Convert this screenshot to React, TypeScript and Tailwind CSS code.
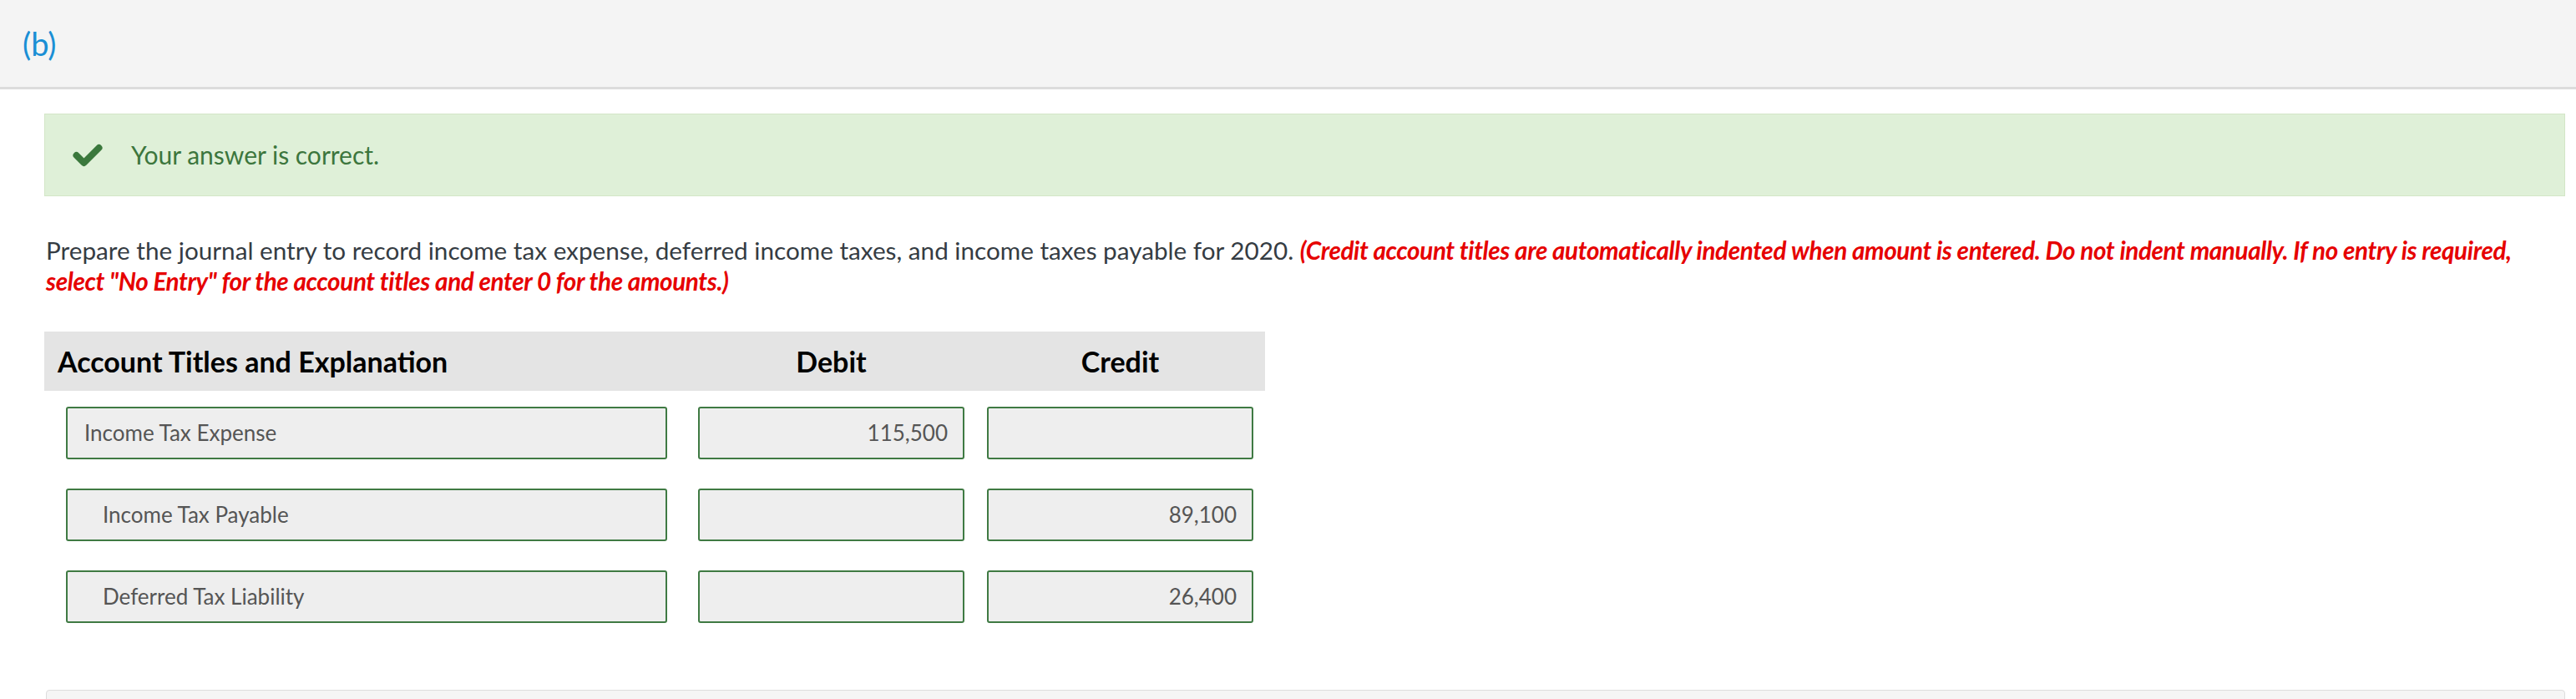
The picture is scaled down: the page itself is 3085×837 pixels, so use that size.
import React from "react";

const font = { fontFamily: "Lato, 'Open Sans', sans-serif" };

function Row({ title, debit, credit, indent }: { title: string; debit?: string; credit?: string; indent?: boolean }) {
  const box = "h-[63px] bg-[#eeeeee] border-2 border-[#3f7a43] rounded-[3px] flex items-center text-[26px] text-[#555555]";
  return (
    <div className="flex pl-[26px]">
      <div className={`${box} w-[720px] ${indent ? "pl-[42px]" : "pl-[20px]"}`}>{title}</div>
      <div className={`${box} w-[319px] ml-[37px] justify-end pr-[18px]`}>{debit}</div>
      <div className={`${box} w-[319px] ml-[27px] justify-end pr-[18px]`}>{credit}</div>
    </div>
  );
}

export default function App() {
  return (
    <div className="w-[3085px] h-[837px] bg-white overflow-hidden" style={font}>
      <div className="h-[107px] bg-[#f4f4f4] border-b-[3px] border-[#dcdcdc] flex items-center pl-[27px]">
        <span className="text-[38px] text-[#1a8fd5] leading-none">(b)</span>
      </div>
      <div className="pl-[53px] pr-[13px]">
        <div className="mt-[29px] h-[99px] bg-[#dff0d8] border border-[#d3e6c7] flex items-center pl-[33px]">
          <svg width="36" height="28" viewBox="0 0 36 28" className="shrink-0">
            <polyline points="4.5,14 13.5,23 31.5,5" fill="none" stroke="#3a783c" strokeWidth="8" strokeLinecap="round" strokeLinejoin="round" />
          </svg>
          <span className="ml-[34px] text-[30px] text-[#3c763d]">Your answer is correct.</span>
        </div>
        <p className="mt-[46px] pl-[2px] text-[29.7px] leading-[37px] text-[#353c43] pr-[16px]">
          Prepare the journal entry to record income tax expense, deferred income taxes, and income taxes payable for 2020.{" "}
          <span className="text-[#e60000] font-bold italic tracking-[-0.4px]">
            (Credit account titles are automatically indented when amount is entered. Do not indent manually. If no entry is required, select "No Entry" for the account titles and enter 0 for the amounts.)
          </span>
        </p>
        <div className="mt-[42px] w-[1462px]">
          <div className="h-[71px] bg-[#e4e4e4] flex items-center text-[34px] font-bold text-black">
            <div className="w-[783px] pl-[16px]">Account Titles and Explanation</div>
            <div className="w-[319px] text-center">Debit</div>
            <div className="w-[319px] ml-[27px] text-center">Credit</div>
          </div>
          <div className="mt-[19px] flex flex-col gap-[35px]">
            <Row title="Income Tax Expense" debit="115,500" />
            <Row title="Income Tax Payable" credit="89,100" indent />
            <Row title="Deferred Tax Liability" credit="26,400" indent />
          </div>
        </div>
        <div className="mt-[80px] ml-[2px] h-[40px] bg-[#f5f5f5] border border-[#dddddd] rounded-t-[4px]"></div>
      </div>
    </div>
  );
}
